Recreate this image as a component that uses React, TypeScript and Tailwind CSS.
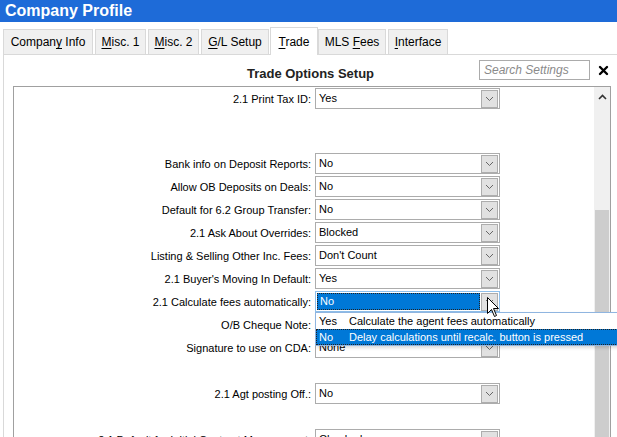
import React from 'react';

const font = { fontFamily: '"Liberation Sans", Arial, sans-serif' };

function Chevron({ up = false }: { up?: boolean }) {
  return (
    <svg width="9" height="6" viewBox="0 0 9 6" className={up ? 'rotate-180' : ''}>
      <path d="M1 1 L4.5 4.5 L8 1" fill="none" stroke={up ? '#333' : '#666'} strokeWidth={up ? 1.6 : 1} />
    </svg>
  );
}

function Tab({ label, active = false, w }: { label: [string, string, string]; active?: boolean; w: string }) {
  return (
    <div
      className={
        active
          ? `relative z-10 -mb-px flex h-[28px] items-center justify-center border border-b-0 border-[#d9d9d9] bg-white text-[12px] text-black ${w}`
          : `flex h-[25px] items-center justify-center border border-b-0 border-[#d9d9d9] bg-[#f0f0f0] text-[12px] text-black ${w}`
      }
    >
      <span>
        {label[0]}
        <span className="underline underline-offset-2">{label[1]}</span>
        {label[2]}
      </span>
    </div>
  );
}

function Select({ value, active = false }: { value: string; active?: boolean }) {
  return (
    <div
      className={`relative flex h-[21px] w-[185px] items-center border bg-white ${
        active ? 'border-[#8fbfea]' : 'border-[#acacac]'
      }`}
    >
      {active ? (
        <div className="ml-[1px] mr-[1px] flex h-[17px] flex-1 items-center border border-dotted border-[#222] bg-[#0078d7] pl-[2px] text-[11px] text-white">
          {value}
        </div>
      ) : (
        <div className="flex-1 pl-[3px] text-[11px] text-black">{value}</div>
      )}
      <div className="mr-[1px] flex h-[18px] w-[17px] items-center justify-center border border-[#adadad] bg-[#e1e1e1]">
        <Chevron />
      </div>
      {active && (
        <div className="absolute left-[-1px] top-[20px] z-20 w-[330px] border border-[#8fb5e0] bg-white text-[11px] shadow-[2px_2px_3px_rgba(0,0,0,0.15)]">
          <div className="flex h-[16px] items-center text-black">
            <span className="w-[33px] pl-[3px]">Yes</span>
            <span>Calculate the agent fees automatically</span>
          </div>
          <div className="flex h-[16px] items-center border border-dotted border-[#222] bg-[#0078d7] text-white">
            <span className="w-[32px] pl-[2px]">No</span>
            <span>Delay calculations until recalc. button is pressed</span>
          </div>
        </div>
      )}
    </div>
  );
}

function Row({ label, value, active = false }: { label: string; value: string; active?: boolean }) {
  return (
    <div className="flex h-[23px] items-start">
      <div className="w-[297px] pt-[4px] text-right text-[11px] leading-[14px] text-black">{label}</div>
      <div className="ml-[4px]">
        <Select value={value} active={active} />
      </div>
    </div>
  );
}

export default function App() {
  return (
    <div className="relative h-[437px] w-[617px] overflow-hidden bg-white" style={font}>
      <div className="flex h-[22px] items-center bg-[#1e6bd8] pl-[5px] text-[16px] font-bold text-white">
        Company Profile
      </div>

      <div className="mt-[5px] flex h-[27px] items-end pl-[3px]">
        <Tab w="w-[90px] mr-[2px]" label={['Compan', 'y', ' Info']} />
        <Tab w="w-[51px] mr-[2px]" label={['', 'M', 'isc. 1']} />
        <Tab w="w-[51px] mr-[2px]" label={['', 'M', 'isc. 2']} />
        <Tab w="w-[68px] mr-[1px]" label={['', 'G', '/L Setup']} />
        <Tab w="w-[48px]" active label={['', 'T', 'rade']} />
        <Tab w="w-[68px] mr-[2px]" label={['MLS ', 'F', 'ees']} />
        <Tab w="w-[60px]" label={['', 'I', 'nterface']} />
      </div>

      <div className="ml-[3px] h-[400px] border-l border-t border-[#d9d9d9]">
        <div className="grid h-[30px] grid-cols-[1fr_auto_1fr] items-center">
          <div />
          <div className="pt-[8px] text-[13px] font-bold text-[#222]">Trade Options Setup</div>
          <div className="flex items-center justify-end pr-[8px]">
            <div className="flex h-[20px] w-[111px] items-center border border-[#ababab] pl-[4px] text-[12px] italic text-[#8a8a8a]">
              Search Settings
            </div>
            <svg width="11" height="11" viewBox="0 0 11 11" className="ml-[8px]">
              <path d="M2 2 L9 9 M9 2 L2 9" stroke="#000" strokeWidth="2.4" strokeLinecap="round" />
            </svg>
          </div>
        </div>

        <div className="ml-[9px] mr-[6px] mt-px flex h-[380px] border border-[#a0a0a0]">
          <div className="flex-1 pt-[1px]">
            <Row label="2.1 Print Tax ID:" value="Yes" />
            <div className="h-[42px]" />
            <Row label="Bank info on Deposit Reports:" value="No" />
            <Row label="Allow OB Deposits on Deals:" value="No" />
            <Row label="Default for 6.2 Group Transfer:" value="No" />
            <Row label="2.1 Ask About Overrides:" value="Blocked" />
            <Row label="Listing & Selling Other Inc. Fees:" value="Don't Count" />
            <Row label="2.1 Buyer's Moving In Default:" value="Yes" />
            <Row label="2.1 Calculate fees automatically:" value="No" active />
            <Row label="O/B Cheque Note:" value="" />
            <Row label="Signature to use on CDA:" value="None" />
            <div className="h-[23px]" />
            <Row label="2.1 Agt posting Off.:" value="No" />
            <div className="h-[23px]" />
            <Row label="2.1 Default for Initial Contract Management:" value="Checked" />
          </div>
          <div className="flex w-[16px] flex-col bg-[#f0f0f0]">
            <div className="flex h-[20px] items-center justify-center">
              <Chevron up />
            </div>
            <div className="h-[103px]" />
            <div className="mx-px flex-1 bg-[#cdcdcd]" />
          </div>
        </div>
      </div>

      <svg width="13" height="21" viewBox="0 0 13 21" className="absolute left-[487px] top-[297px] z-30">
        <path d="M0.5 0.5 L0.5 16.5 L4.5 12.5 L7.5 19.5 L9.5 18.5 L6.5 11.5 L11.5 11.5 Z" fill="#fff" stroke="#000" strokeWidth="1" />
      </svg>
    </div>
  );
}
